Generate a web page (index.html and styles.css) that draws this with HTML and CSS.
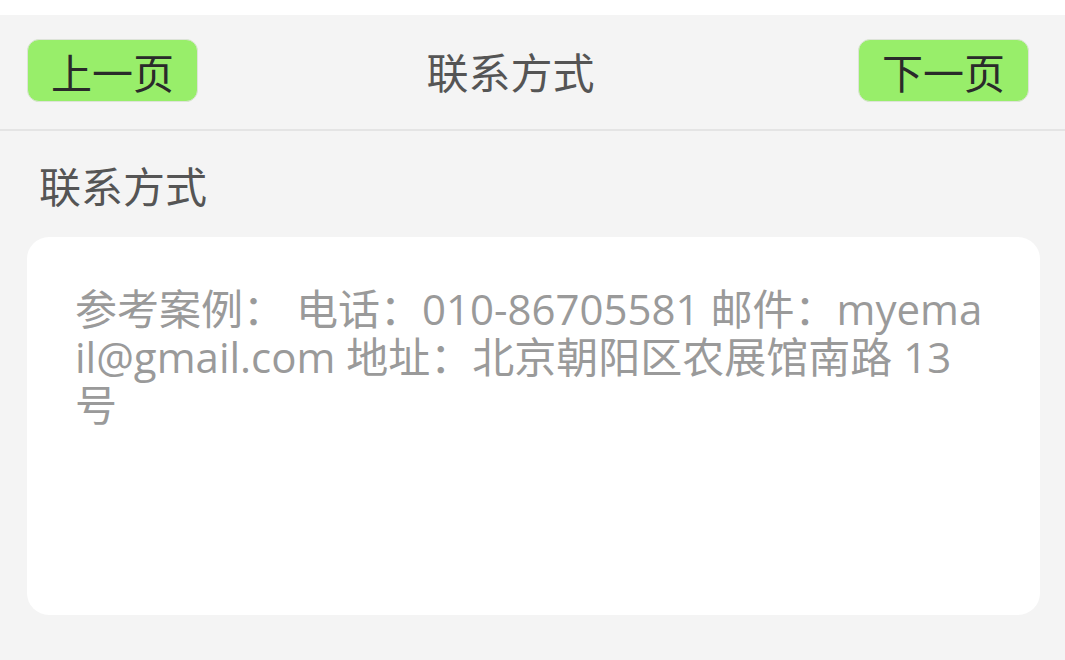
FILE: index.html
```html
<!DOCTYPE html>
<html lang="zh-CN">
<head>
<meta charset="utf-8">
<title>联系方式</title>
<link rel="stylesheet" href="styles.css">
</head>
<body>
<div class="topstrip"></div>
<header class="navbar">
  <button class="nav-btn">上一页</button>
  <div class="nav-title">联系方式</div>
  <button class="nav-btn">下一页</button>
</header>
<main class="content">
  <h2 class="section-title">联系方式</h2>
  <div class="card">
    <p class="placeholder">参考案例： 电话：010-86705581 邮件：myemail@gmail.com 地址：北京朝阳区农展馆南路 13号</p>
  </div>
</main>
</body>
</html>
```
FILE: styles.css
```css
* { box-sizing: border-box; }
html, body {
  margin: 0;
  padding: 0;
  background: #f4f4f4;
  font-family: "Open Sans", "Noto Sans CJK SC", sans-serif;
}
body { height: 660px; overflow: hidden; }
.topstrip { height: 15px; background: #ffffff; }
.navbar {
  height: 116px;
  display: grid;
  grid-template-columns: auto 1fr auto;
  align-items: center;
  padding: 0 36px 0 27px;
  border-bottom: 2px solid #e4e4e4;
}
.nav-btn {
  width: 171px;
  height: 63px;
  margin-top: -3px;
  background: #98ee6a;
  border: 1.5px solid #dde3d8;
  border-radius: 12px;
  font-family: "Noto Sans CJK SC", sans-serif;
  font-size: 41px;
  line-height: 48px;
  color: #2a2a2a;
  padding: 0;
}
.nav-title {
  text-align: center;
  padding-right: 35px;
  margin-top: -4px;
  font-family: "Noto Sans CJK SC", sans-serif;
  font-size: 42px;
  color: #555555;
}
.content { padding: 0 25px 0 27px; }
.section-title {
  margin: 30px 0 28px 12px;
  font-family: "Noto Sans CJK SC", sans-serif;
  font-weight: normal;
  font-size: 42px;
  line-height: 48px;
  color: #555555;
}
.card {
  background: #ffffff;
  border-radius: 22px;
  height: 378px;
  padding: 48px 55px 0 48px;
}
.placeholder {
  margin: 0;
  font-size: 42px;
  line-height: 48px;
  color: #9a9a9a;
  word-break: break-all;
}
```
